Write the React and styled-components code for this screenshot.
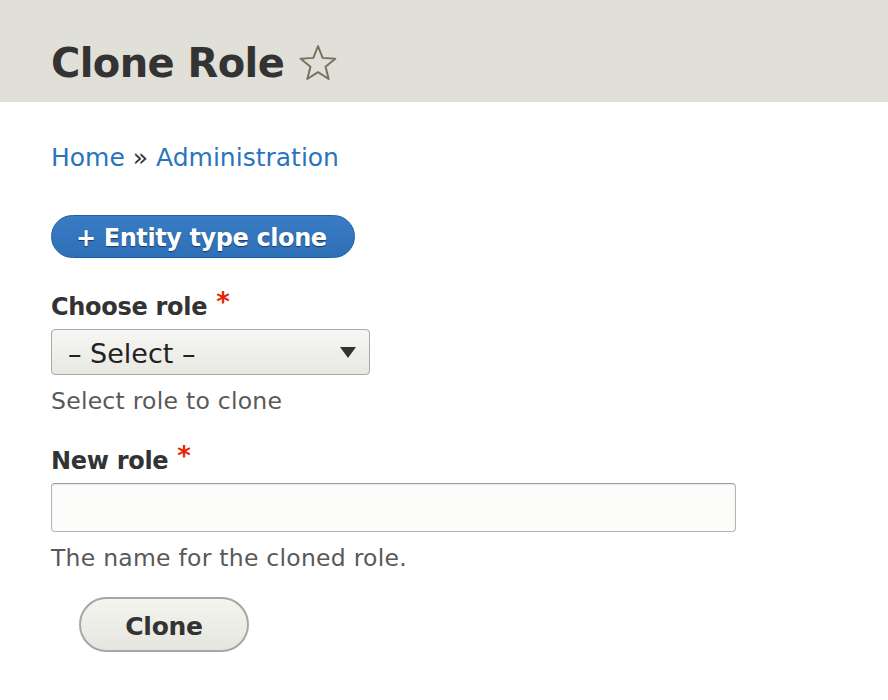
import React from 'react'
import styled, { createGlobalStyle } from 'styled-components'

const GlobalStyle = createGlobalStyle`
  body {
    margin: 0;
    background: #fff;
    font-family: "DejaVu Sans", Verdana, sans-serif;
    color: #333;
  }
`;

const Header = styled.header`
  height: 102px;
  background: #e0e0d8;
  display: flex;
  align-items: flex-end;
  padding: 0 51px 15px;
  box-sizing: border-box;
`;

const Title = styled.h1`
  margin: 0;
  font-size: 40px;
  font-weight: bold;
  letter-spacing: -0.6px;
  color: #333;
  line-height: 48px;
`;

const StarBtn = styled.span`
  display: inline-flex;
  margin-left: 15px;
  margin-bottom: 5px;
`;

const Main = styled.main`
  padding: 38px 51px 0;
  display: flex;
  flex-direction: column;
  align-items: flex-start;
`;

const Breadcrumb = styled.nav`
  font-size: 25px;
  line-height: 36px;
  color: #333;

  a {
    color: #2a74bd;
    text-decoration: none;
  }
`;

const PrimaryAction = styled.a`
  margin-top: 39px;
  height: 43px;
  box-sizing: border-box;
  display: inline-flex;
  align-items: center;
  padding: 3px 27px 0 24px;
  border-radius: 22px;
  border: 1px solid #1f5ea0;
  background: linear-gradient(#3a7cc3, #2e70b8);
  color: #fff;
  font-size: 24px;
  font-weight: bold;
  letter-spacing: -0.4px;
  text-shadow: 0 1px 1px #163a60;
  text-decoration: none;
`;

const Form = styled.form`
  margin-top: 34px;
  display: flex;
  flex-direction: column;
  align-items: flex-start;
`;

const Field = styled.div`
  display: flex;
  flex-direction: column;
  align-items: flex-start;
  margin-bottom: ${p => p.$last ? '24px' : '30px'};
`;

const Label = styled.label`
  font-size: 24px;
  line-height: 30px;
  height: 30px;
  font-weight: bold;
  letter-spacing: -0.3px;
  color: #333;
  margin-bottom: 7px;
`;

const Req = styled.span`
  color: #e32700;
  margin-left: 9px;
  font-size: 26px;
  line-height: 0;
  vertical-align: 4px;
`;

const SelectBox = styled.div`
  width: 319px;
  height: 46px;
  box-sizing: border-box;
  border: 1px solid #a8a8a8;
  border-radius: 4px;
  background: linear-gradient(#f6f6f3, #e8e8e3);
  display: flex;
  align-items: center;
  justify-content: space-between;
  padding: 2px 13px 0 16px;
  font-size: 27px;
  color: #222;
`;

const Arrow = styled.span`
  width: 0;
  height: 0;
  border-left: 8px solid transparent;
  border-right: 8px solid transparent;
  border-top: 11px solid #333;
  margin-top: -2px;
`;

const TextInput = styled.input`
  width: 685px;
  height: 49px;
  box-sizing: border-box;
  border: 1px solid #b4b4b4;
  border-top-color: #999;
  border-radius: 4px;
  background: #fcfcfa;
  box-shadow: inset 0 1px 2px rgba(0, 0, 0, 0.08);
  font-family: inherit;
  font-size: 24px;
  padding: 0 12px;
  outline: none;
`;

const Description = styled.div`
  margin-top: 11px;
  font-size: 23.5px;
  letter-spacing: 0.25px;
  line-height: 30px;
  color: #595959;
`;

const Button = styled.button`
  margin-left: 28px;
  width: 170px;
  height: 55px;
  box-sizing: border-box;
  border: 2px solid #a6a6a6;
  border-radius: 28px;
  background: linear-gradient(#f4f4f0, #e6e6df);
  font-family: inherit;
  font-size: 25px;
  font-weight: bold;
  color: #333;
  padding: 3px 0 0;
  letter-spacing: -0.3px;
`;

function Star() {
  return (
    <svg width="38" height="38" viewBox="0 0 24 24" fill="none" stroke="#77735f" strokeWidth="1.25" strokeLinejoin="round">
      <polygon points="12,1.3 14.94,8.76 22.94,9.25 16.76,14.35 18.76,22.1 12,17.8 5.24,22.1 7.24,14.35 1.06,9.25 9.06,8.76" />
    </svg>
  );
}

export default function App() {
  return (
    <>
      <GlobalStyle />
      <Header>
        <Title>Clone Role</Title>
        <StarBtn><Star /></StarBtn>
      </Header>
      <Main>
        <Breadcrumb>
          <a href="#">Home</a> » <a href="#">Administration</a>
        </Breadcrumb>
        <PrimaryAction href="#">+ Entity type clone</PrimaryAction>
        <Form onSubmit={e => e.preventDefault()}>
          <Field>
            <Label>Choose role<Req>*</Req></Label>
            <SelectBox>
              <span>– Select –</span>
              <Arrow />
            </SelectBox>
            <Description>Select role to clone</Description>
          </Field>
          <Field $last>
            <Label>New role<Req>*</Req></Label>
            <TextInput type="text" />
            <Description>The name for the cloned role.</Description>
          </Field>
          <Button type="submit">Clone</Button>
        </Form>
      </Main>
    </>
  )
}
